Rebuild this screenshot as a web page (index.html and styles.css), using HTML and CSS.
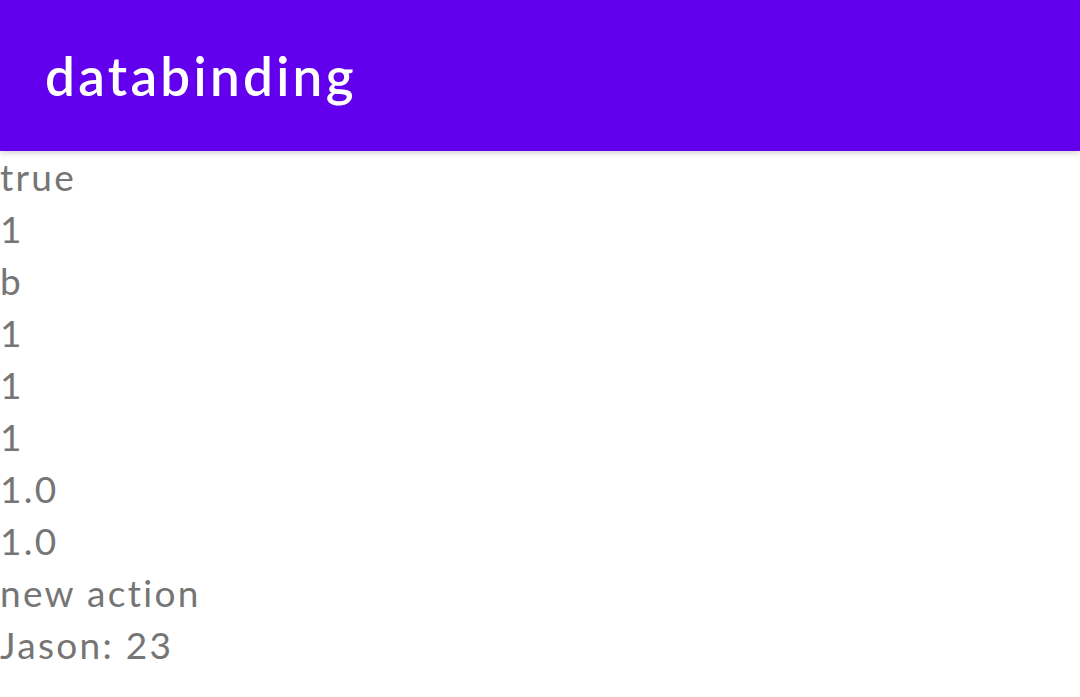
FILE: index.html
```html
<!DOCTYPE html>
<html lang="en">
<head>
    <meta charset="UTF-8">
    <meta name="viewport" content="width=device-width, initial-scale=1.0">
    <title>databinding</title>
    <link rel="stylesheet" href="styles.css">
</head>
<body>
    <header class="app-bar">
        <h1 class="app-title">databinding</h1>
    </header>

    <main class="content">
        <div class="line">true</div>
        <div class="line">1</div>
        <div class="line">b</div>
        <div class="line">1</div>
        <div class="line">1</div>
        <div class="line">1</div>
        <div class="line">1.0</div>
        <div class="line">1.0</div>
        <div class="line">new action</div>
        <div class="line">Jason: 23</div>
    </main>
</body>
</html>
```

FILE: styles.css
```css
* {
    margin: 0;
    padding: 0;
    box-sizing: border-box;
}

body {
    font-family: Lato, "Open Sans", sans-serif;
    background-color: #fff;
    width: 1080px;
    height: 697px;
    overflow: hidden;
}

.app-bar {
    height: 151px;
    background-color: #6200ee;
    display: flex;
    align-items: center;
    padding-left: 45px;
    box-shadow: 0 2px 6px rgba(0, 0, 0, 0.18);
    position: relative;
    z-index: 1;
}

.app-title {
    color: #fff;
    font-size: 53px;
    font-weight: 600;
    letter-spacing: 3.3px;
}

.content {
    display: flex;
    flex-direction: column;
}

.line {
    color: #757575;
    font-size: 37px;
    line-height: 52px;
    letter-spacing: 2.3px;
}
```
